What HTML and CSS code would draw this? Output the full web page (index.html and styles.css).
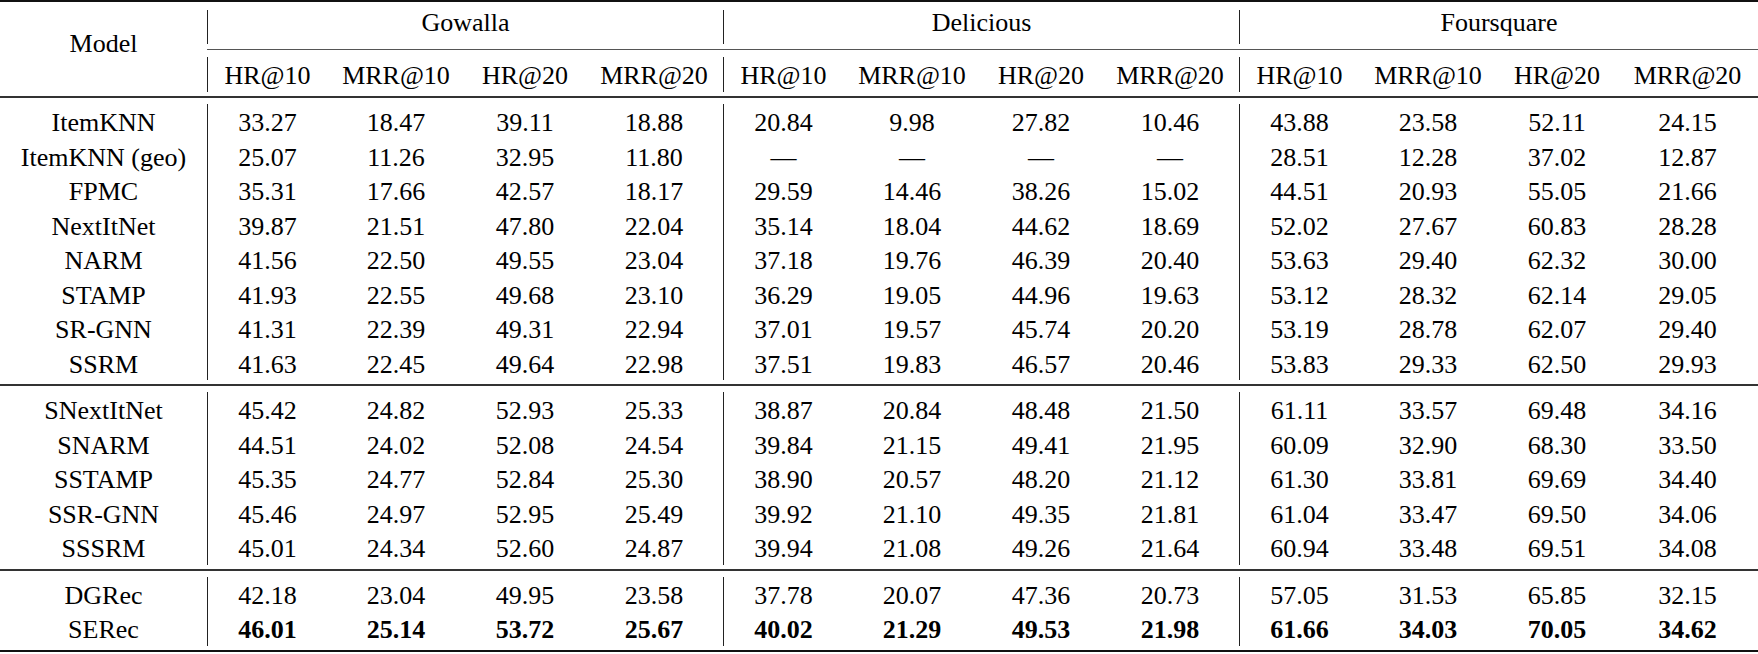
FILE: index.html
```html
<!DOCTYPE html>
<html lang="en">
<head>
<meta charset="utf-8">
<title>Results table</title>
<link rel="stylesheet" href="styles.css">
</head>
<body>
<div class="tbl">
  <div class="rule-outer"></div>
  <div class="head">
    <div class="model">Model</div>
    <div class="grp">Gowalla</div>
    <div class="grp">Delicious</div>
    <div class="grp">Foursquare</div>
    <div class="cmid"></div>
    <div class="met b">HR@10</div><div class="met">MRR@10</div><div class="met">HR@20</div><div class="met">MRR@20</div>
    <div class="met b">HR@10</div><div class="met">MRR@10</div><div class="met">HR@20</div><div class="met">MRR@20</div>
    <div class="met b">HR@10</div><div class="met">MRR@10</div><div class="met">HR@20</div><div class="met">MRR@20</div>
  </div>
  <div class="rule-mid"></div>
  <div class="sec">
    <div class="row"><div>ItemKNN</div><div>33.27</div><div>18.47</div><div>39.11</div><div>18.88</div><div>20.84</div><div>9.98</div><div>27.82</div><div>10.46</div><div>43.88</div><div>23.58</div><div>52.11</div><div>24.15</div></div>
    <div class="row"><div>ItemKNN (geo)</div><div>25.07</div><div>11.26</div><div>32.95</div><div>11.80</div><div>—</div><div>—</div><div>—</div><div>—</div><div>28.51</div><div>12.28</div><div>37.02</div><div>12.87</div></div>
    <div class="row"><div>FPMC</div><div>35.31</div><div>17.66</div><div>42.57</div><div>18.17</div><div>29.59</div><div>14.46</div><div>38.26</div><div>15.02</div><div>44.51</div><div>20.93</div><div>55.05</div><div>21.66</div></div>
    <div class="row"><div>NextItNet</div><div>39.87</div><div>21.51</div><div>47.80</div><div>22.04</div><div>35.14</div><div>18.04</div><div>44.62</div><div>18.69</div><div>52.02</div><div>27.67</div><div>60.83</div><div>28.28</div></div>
    <div class="row"><div>NARM</div><div>41.56</div><div>22.50</div><div>49.55</div><div>23.04</div><div>37.18</div><div>19.76</div><div>46.39</div><div>20.40</div><div>53.63</div><div>29.40</div><div>62.32</div><div>30.00</div></div>
    <div class="row"><div>STAMP</div><div>41.93</div><div>22.55</div><div>49.68</div><div>23.10</div><div>36.29</div><div>19.05</div><div>44.96</div><div>19.63</div><div>53.12</div><div>28.32</div><div>62.14</div><div>29.05</div></div>
    <div class="row"><div>SR-GNN</div><div>41.31</div><div>22.39</div><div>49.31</div><div>22.94</div><div>37.01</div><div>19.57</div><div>45.74</div><div>20.20</div><div>53.19</div><div>28.78</div><div>62.07</div><div>29.40</div></div>
    <div class="row"><div>SSRM</div><div>41.63</div><div>22.45</div><div>49.64</div><div>22.98</div><div>37.51</div><div>19.83</div><div>46.57</div><div>20.46</div><div>53.83</div><div>29.33</div><div>62.50</div><div>29.93</div></div>
  </div>
  <div class="rule-mid"></div>
  <div class="sec">
    <div class="row"><div>SNextItNet</div><div>45.42</div><div>24.82</div><div>52.93</div><div>25.33</div><div>38.87</div><div>20.84</div><div>48.48</div><div>21.50</div><div>61.11</div><div>33.57</div><div>69.48</div><div>34.16</div></div>
    <div class="row"><div>SNARM</div><div>44.51</div><div>24.02</div><div>52.08</div><div>24.54</div><div>39.84</div><div>21.15</div><div>49.41</div><div>21.95</div><div>60.09</div><div>32.90</div><div>68.30</div><div>33.50</div></div>
    <div class="row"><div>SSTAMP</div><div>45.35</div><div>24.77</div><div>52.84</div><div>25.30</div><div>38.90</div><div>20.57</div><div>48.20</div><div>21.12</div><div>61.30</div><div>33.81</div><div>69.69</div><div>34.40</div></div>
    <div class="row"><div>SSR-GNN</div><div>45.46</div><div>24.97</div><div>52.95</div><div>25.49</div><div>39.92</div><div>21.10</div><div>49.35</div><div>21.81</div><div>61.04</div><div>33.47</div><div>69.50</div><div>34.06</div></div>
    <div class="row"><div>SSSRM</div><div>45.01</div><div>24.34</div><div>52.60</div><div>24.87</div><div>39.94</div><div>21.08</div><div>49.26</div><div>21.64</div><div>60.94</div><div>33.48</div><div>69.51</div><div>34.08</div></div>
  </div>
  <div class="rule-mid"></div>
  <div class="sec">
    <div class="row"><div>DGRec</div><div>42.18</div><div>23.04</div><div>49.95</div><div>23.58</div><div>37.78</div><div>20.07</div><div>47.36</div><div>20.73</div><div>57.05</div><div>31.53</div><div>65.85</div><div>32.15</div></div>
    <div class="row best"><div>SERec</div><div>46.01</div><div>25.14</div><div>53.72</div><div>25.67</div><div>40.02</div><div>21.29</div><div>49.53</div><div>21.98</div><div>61.66</div><div>34.03</div><div>70.05</div><div>34.62</div></div>
  </div>
  <div class="rule-outer"></div>
</div>
</body>
</html>
```

FILE: styles.css
```css
body {
  margin: 0;
  background: #ffffff;
  color: #000000;
  font-family: "Liberation Serif", "Times New Roman", serif;
}

.tbl {
  --cols: 207px 120px 138px 120px 138px 120px 138px 120px 138px 120px 138px 120px 141px;
  width: 1758px;
}

.rule-outer {
  height: 2px;
  background: #111111;
}

.rule-mid {
  height: 2px;
  background: #333333;
}

.head {
  display: grid;
  grid-template-columns: var(--cols);
  grid-template-rows: 8px 34px 5px 1px 7px 35px 4px;
  font-size: 26px;
}

.model {
  grid-column: 1;
  grid-row: 1 / -1;
  display: flex;
  align-items: center;
  justify-content: center;
  padding-bottom: 10px;
  line-height: 30px;
}

.grp {
  grid-row: 2;
  grid-column: span 4;
  border-left: 1px solid #222222;
  text-align: center;
  line-height: 26px;
  padding-top: 0;
}

.cmid {
  grid-row: 4;
  grid-column: 2 / -1;
  background: #555555;
}

.met {
  grid-row: 6;
  text-align: center;
  line-height: 31.5px;
  padding-top: 3px;
  white-space: nowrap;
}

.met.b {
  border-left: 1px solid #222222;
}

.sec {
  padding: 6px 0 4px;
}

.row {
  display: grid;
  grid-template-columns: var(--cols);
  height: 34.5px;
  font-size: 26px;
}

.row > div {
  text-align: center;
  white-space: nowrap;
  line-height: 31.5px;
  padding-top: 3px;
}

.row > div:nth-child(4n+2) {
  border-left: 1px solid #222222;
}

.best > div + div {
  font-weight: bold;
}
```
